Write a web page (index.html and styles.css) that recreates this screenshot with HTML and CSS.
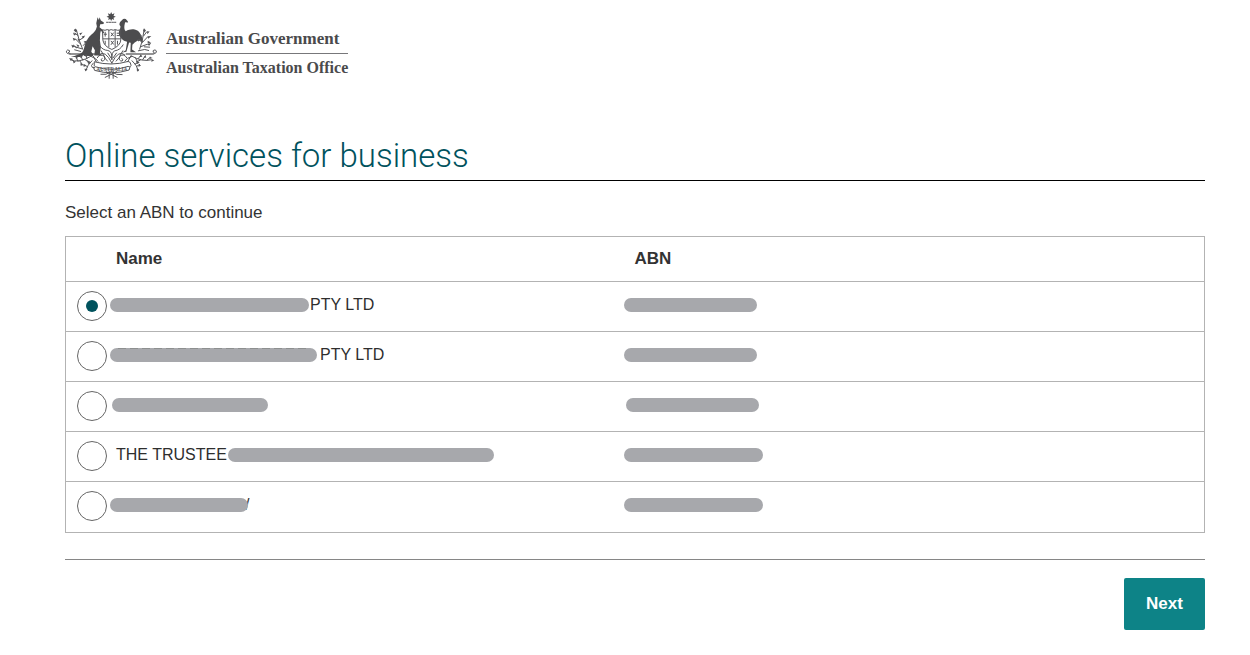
FILE: index.html
```html
<!DOCTYPE html>
<html lang="en">
<head>
<meta charset="utf-8">
<meta name="viewport" content="width=device-width, initial-scale=1">
<title>Online services for business</title>
<link rel="stylesheet" href="styles.css">
</head>
<body>
<div class="page">
  <header class="brand">
    <svg class="crest" viewBox="15 20 280 202" aria-hidden="true">
      <g fill="#4c4c4e">
        <path d="M154 20l3 7 7-3-3 7 7 3-7 3 2 7-6-3-3 6-3-6-6 3 2-7-7-3 7-3-3-7 7 3z"/>
        <path d="M113 36l4 8 2-8 4 10 9 6-1 4-10 1-2 9 10 8 4 9-4 1-6-8-2 8-1 22 3 20-3 19 7 6h-24l2-16-7-12-4 17 6 8-1 5H72l4-16-2 12-14 7H32c16-5 28-9 35-15 7-9 6-24 14-36 8-15 22-21 27-32l3-9-2-10z"/>
        <path d="M187 44q4-6 11-3l6 7 1 4-9-1-2 10c-1 8 0 14 4 17 9-5 18-7 27-5 12 2 18 13 22 23l3 16-12-8-13 8-7 7-1 14 12 8h-17l1-28-5-1-6 20-2 8-13 2 11-7 4-25c-13-3-23-13-25-25-1-9 6-14 5-22-4-4-4-7-1-13z"/>
        <path d="M28 144h86v5H28zM198 144h84v5h-84z" opacity=".8"/>
      </g>
      <g fill="none" stroke="#555558" stroke-width="3" stroke-linecap="round">
        <path d="M140 51h28" stroke-dasharray="5 3"/>
        <path d="M129 74q7 3 13-1 6 4 12 0 6 4 12 0 7 4 17 1v30q-1 18-27 29-25-10-27-28zM130 101h52M147 75v50M166 75v50"/>
        <path d="M136 81v12M133 87h7M154 83l7 9m0-9-7 9M172 84h7m-7 7h7M136 108v9M154 108l7 9m0-9-7 10M173 108v9"/>
        <path d="M30 146q-12 1-11-8 3-6 9-2 3 6-3 7M282 146q10-1 8-9-3-5-9-1-3 6 3 7"/>
        <path d="M68 132Q58 111 49 74M61 116l-13-13M58 105l14-9M54 91l-9-7M70 121l8-9M50 128l-10-8M66 131l-21-6M62 139l-18-5"/>
        <path d="M240 132q9-23 13-56M248 112l-11-9M249 111l14-15M252 92l9-12M242 125l19-7M254 125l16 1M236 137l19-4 12 3"/>
        <path d="M120 122q8 13 24 14 14 2 12 27M190 119q-9 16-25 18-10 3-9 26M117 149q19-17 39 25M195 149q-19-17-39 25M124 137l12 22M189 137l-12 22M144 144l9 14M170 144l-10 14"/>
        <path d="M112 158q8-14 21-5 5 15-7 15-6-5 1-8M201 158q-8-14-21-5-5 15 7 15 6-5-1-8M100 153l9 17M213 153l-9 17M143 168l-7-8M169 168l7-8"/>
        <path d="M31 164q24 12 63-11M43 170l-9-8M54 169l-5-12M68 165l-5-12M81 160l-3-11M59 167l8 11M76 164l14 7M94 154q17 7 20 14"/>
        <path d="M275 164q-26 8-61-12M263 164l9-7M249 164l7-11M236 160l7-9M227 158l8 15M242 165l-11 5M216 154q-17 5-21 14"/>
        <path d="M77 197q6-19 19-30M82 185l-8-6M88 176l-7-8M236 197q-5-19-19-30M231 184l9-6M226 177l10-5"/>
        <path d="M99 175q-8 7-2 12 7 4 9-2 50 16 99-1 5 5 9-3-1-12-9-12-50 15-102 1v13M101 187l3 9q52 15 104-1l3-10"/>
        <path d="M154 200q-16 12-31 8M155 200q15 12 32 9M139 200l33 17M170 200l-34 17M148 199v21M160 199v21"/>
      </g>
      <g fill="#555558">
        <path d="M46 70l6 7-5 4-6-6zM39 82l10 5-7 4zM58 84l10-2-7 8zM38 98l12 4-9 5zM65 94l11-3-7 9zM34 119l12 4-9 5zM71 109l12-3-7 9zM52 100l8 3-3 7zM49 117l9 4-4 6zM253 69l6 7-5 6-4-7zM262 78l8 1-7 8zM240 86l8 7-8 1zM263 93l12-1-9 9zM264 107l10 5-10 3zM261 117l14-4-6 9zM233 101l9 4-7 4z"/>
        <path d="M27 159l12 2-7 6zM39 168l9 1-7 6zM46 153l8 5-6 3zM61 149l7 6-7 4zM77 146l7 6-7 4zM61 174l10 6-9 2zM84 168l9 6-9 2zM70 177l9 6-8 2zM73 191l10 1-6 7zM270 155l9 4-9 3zM276 162l8 4-9 4zM257 149l3 8-7 2zM243 147l5 8-8 1zM229 167l11 5-8 5zM238 177l6 5-8 3zM231 190l8 4-7 6z"/>
      </g>
      <text class="crest-motto" x="156" y="197" text-anchor="middle">AUSTRALIA</text>
    </svg>
    <div class="brand-text">
      <span class="brand-government">Australian Government</span>
      <span class="brand-office">Australian Taxation Office</span>
    </div>
  </header>

  <main>
    <h1 class="title">Online services for business</h1>
    <form class="abn-form">
      <p class="intro" id="intro">Select an ABN to continue</p>
      <div class="table-frame">
        <table class="abn-table" aria-labelledby="intro">
          <thead>
            <tr><th class="col-radio"></th><th class="col-name" scope="col">Name</th><th class="col-abn" scope="col">ABN</th></tr>
          </thead>
          <tbody>
            <tr>
              <td class="col-radio"><input class="radio" type="radio" name="abn" id="abn1" checked></td>
              <td><label class="entry" for="abn1"><span class="mask mask-m"></span>PTY LTD</label></td>
              <td><span class="entry"><span class="mask mask-abn"></span></span></td>
            </tr>
            <tr>
              <td class="col-radio"><input class="radio" type="radio" name="abn" id="abn2"></td>
              <td><label class="entry entry-spaced" for="abn2"><span class="mask mask-l mask-trace"></span>PTY LTD</label></td>
              <td><span class="entry"><span class="mask mask-abn"></span></span></td>
            </tr>
            <tr>
              <td class="col-radio"><input class="radio" type="radio" name="abn" id="abn3" aria-label="Business 3"></td>
              <td><label class="entry entry-inset" for="abn3"><span class="mask mask-s"></span></label></td>
              <td><span class="entry entry-inset"><span class="mask mask-abn"></span></span></td>
            </tr>
            <tr>
              <td class="col-radio"><input class="radio" type="radio" name="abn" id="abn4"></td>
              <td><label class="entry entry-text" for="abn4">THE TRUSTEE<span class="mask mask-xl"></span></label></td>
              <td><span class="entry"><span class="mask mask-abn-wide"></span></span></td>
            </tr>
            <tr>
              <td class="col-radio"><input class="radio" type="radio" name="abn" id="abn5"></td>
              <td><label class="entry" for="abn5"><span class="mask mask-xs"></span><span class="tail">/</span></label></td>
              <td><span class="entry"><span class="mask mask-abn-wide"></span></span></td>
            </tr>
          </tbody>
        </table>
      </div>
      <div class="actions"><button class="next" type="submit">Next</button></div>
    </form>
  </main>
</div>
</body>
</html>
```
FILE: styles.css
```css
* { box-sizing: border-box; }

body {
  margin: 0;
  background: #fff;
  color: #333;
  font: 17px/24px "Liberation Sans", Arial, sans-serif;
}

.page { padding: 12px 45px 24px 65px; }

.brand { display: flex; align-items: flex-start; gap: 8px; }
.crest { width: 93px; height: 67px; flex: none; }
.crest-motto { font: bold 16px "Liberation Serif", serif; fill: #555558; }

.brand-text {
  display: flex;
  flex-direction: column;
  padding-top: 15px;
  color: #4a4a4c;
  font-family: "Liberation Serif", "Times New Roman", serif;
  font-weight: bold;
}
.brand-government {
  padding-bottom: 2px;
  border-bottom: 1px solid #77777a;
  font-size: 17px;
}
.brand-office { padding-top: 2px; font-size: 16px; }

.title {
  margin: 56px 0 0;
  padding-bottom: 4px;
  border-bottom: 1px solid #000;
  color: #00525d;
  font: 300 33px/40px Roboto, "Liberation Sans", sans-serif;
}

.intro { margin: 20px 0 11px; }

.table-frame { border: 1px solid #b3b3b3; }
.abn-table { width: 100%; border-collapse: separate; border-spacing: 0; table-layout: fixed; }
.abn-table th { height: 45px; padding: 0 0 0 6px; border-bottom: 1px solid #b3b3b3; text-align: left; }
.abn-table th.col-abn { padding-left: 10px; }
.abn-table td { height: 50px; padding: 0; border-bottom: 1px solid #b3b3b3; vertical-align: top; font-size: 16px; }
.abn-table tr:last-child td { border-bottom: 0; }
.abn-table .col-radio { width: 44px; }
.abn-table td.col-radio { padding: 9px 0 0 11px; }
.abn-table .col-name { width: 45.2%; }
.abn-table thead th { border-bottom: 1px solid #b3b3b3; }

.radio {
  appearance: none;
  display: grid;
  place-items: center;
  width: 30px;
  height: 30px;
  margin: 0;
  border: 1px solid #666;
  border-radius: 50%;
  background: #fff;
}
.radio:checked::before {
  content: "";
  width: 12px;
  height: 12px;
  border-radius: 50%;
  background: #00525d;
}

.entry { display: flex; align-items: center; gap: 1px; padding-top: 11px; min-height: 35px; color: #2e2e2e; }
.entry-spaced { gap: 3px; }
.entry-inset { padding-left: 2px; }
.entry-text { padding-left: 6px; }

.mask { position: relative; flex: none; height: 14px; border-radius: 7px; background: #a7a8ac; }
.mask-xs { width: 138px; }
.mask-s { width: 156px; }
.mask-m { width: 199px; }
.mask-l { width: 207px; }
.mask-xl { width: 266px; }
.mask-abn { width: 133px; }
.mask-abn-wide { width: 139px; }
.mask-trace::before {
  content: "";
  position: absolute;
  top: 0;
  left: 8px;
  right: 8px;
  height: 1px;
  background: repeating-linear-gradient(90deg, #8d8f8f 0 8px, #a7a8ac 8px 12px);
}
.tail { margin-left: -4px; }

.actions {
  display: flex;
  justify-content: flex-end;
  margin-top: 26px;
  padding-top: 18px;
  border-top: 1px solid #868686;
}
.next {
  padding: 14px 21px;
  border: 0;
  border-radius: 2px;
  background: #0d8387;
  color: #fff;
  font: bold 17px/24px "Liberation Sans", Arial, sans-serif;
  min-width: 81px;
}
```
